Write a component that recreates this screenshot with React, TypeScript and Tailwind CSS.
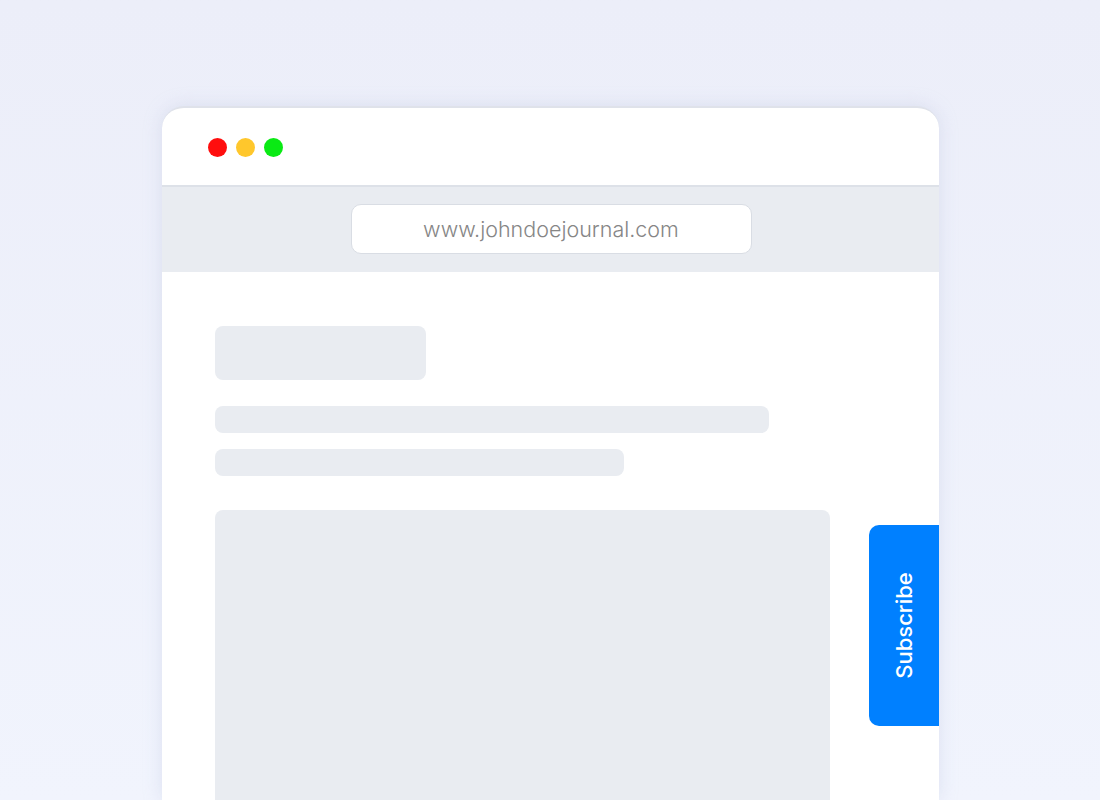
import React from "react";

export default function App() {
  return (
    <div
      className="relative h-[800px] w-[1100px] overflow-hidden bg-gradient-to-b from-[#eceef9] to-[#f1f4fd] pt-[106px]"
      style={{ fontFamily: "Inter, 'Noto Sans', sans-serif" }}
    >
      <div className="relative ml-[162px] w-[777px] h-[694px] rounded-t-[22px] bg-white border-t-[2px] border-[#dfe2ea] shadow-[0_0_18px_rgba(180,188,220,0.35)]">
        {/* title bar */}
        <div className="flex h-[79px] items-center gap-[9px] pl-[46px] pt-[1px] border-b-[2px] border-[#dde1e8]">
          <span className="h-[19px] w-[19px] rounded-full bg-[#ff0e0e]" />
          <span className="h-[19px] w-[19px] rounded-full bg-[#ffc72c]" />
          <span className="h-[19px] w-[19px] rounded-full bg-[#0aea14]" />
        </div>
        {/* address bar */}
        <div className="flex h-[85px] items-start justify-center bg-[#e9ecf1] pt-[17px]">
          <div className="ml-[1px] flex h-[50px] w-[401px] items-center justify-center rounded-[10px] border border-[#d9dde4] bg-white text-[21.5px] font-light text-[#868686]">
            www.johndoejournal.com
          </div>
        </div>
        {/* content */}
        <div className="flex flex-col pl-[53px] pt-[54px]">
          <div className="h-[54px] w-[211px] rounded-[8px] bg-[#e9ecf1]" />
          <div className="mt-[26px] h-[27px] w-[554px] rounded-[8px] bg-[#e9ecf1]" />
          <div className="mt-[16px] h-[27px] w-[409px] rounded-[8px] bg-[#e9ecf1]" />
          <div className="mt-[34px] h-[300px] w-[615px] rounded-t-[8px] bg-[#e9ecf1]" />
        </div>
        {/* subscribe tab */}
        <div className="absolute right-0 top-[417px] flex h-[201px] w-[70px] items-center justify-center rounded-l-[10px] bg-[#0080ff]">
          <span className="-rotate-90 whitespace-nowrap text-[22px] font-medium text-white">Subscribe</span>
        </div>
      </div>
    </div>
  );
}
